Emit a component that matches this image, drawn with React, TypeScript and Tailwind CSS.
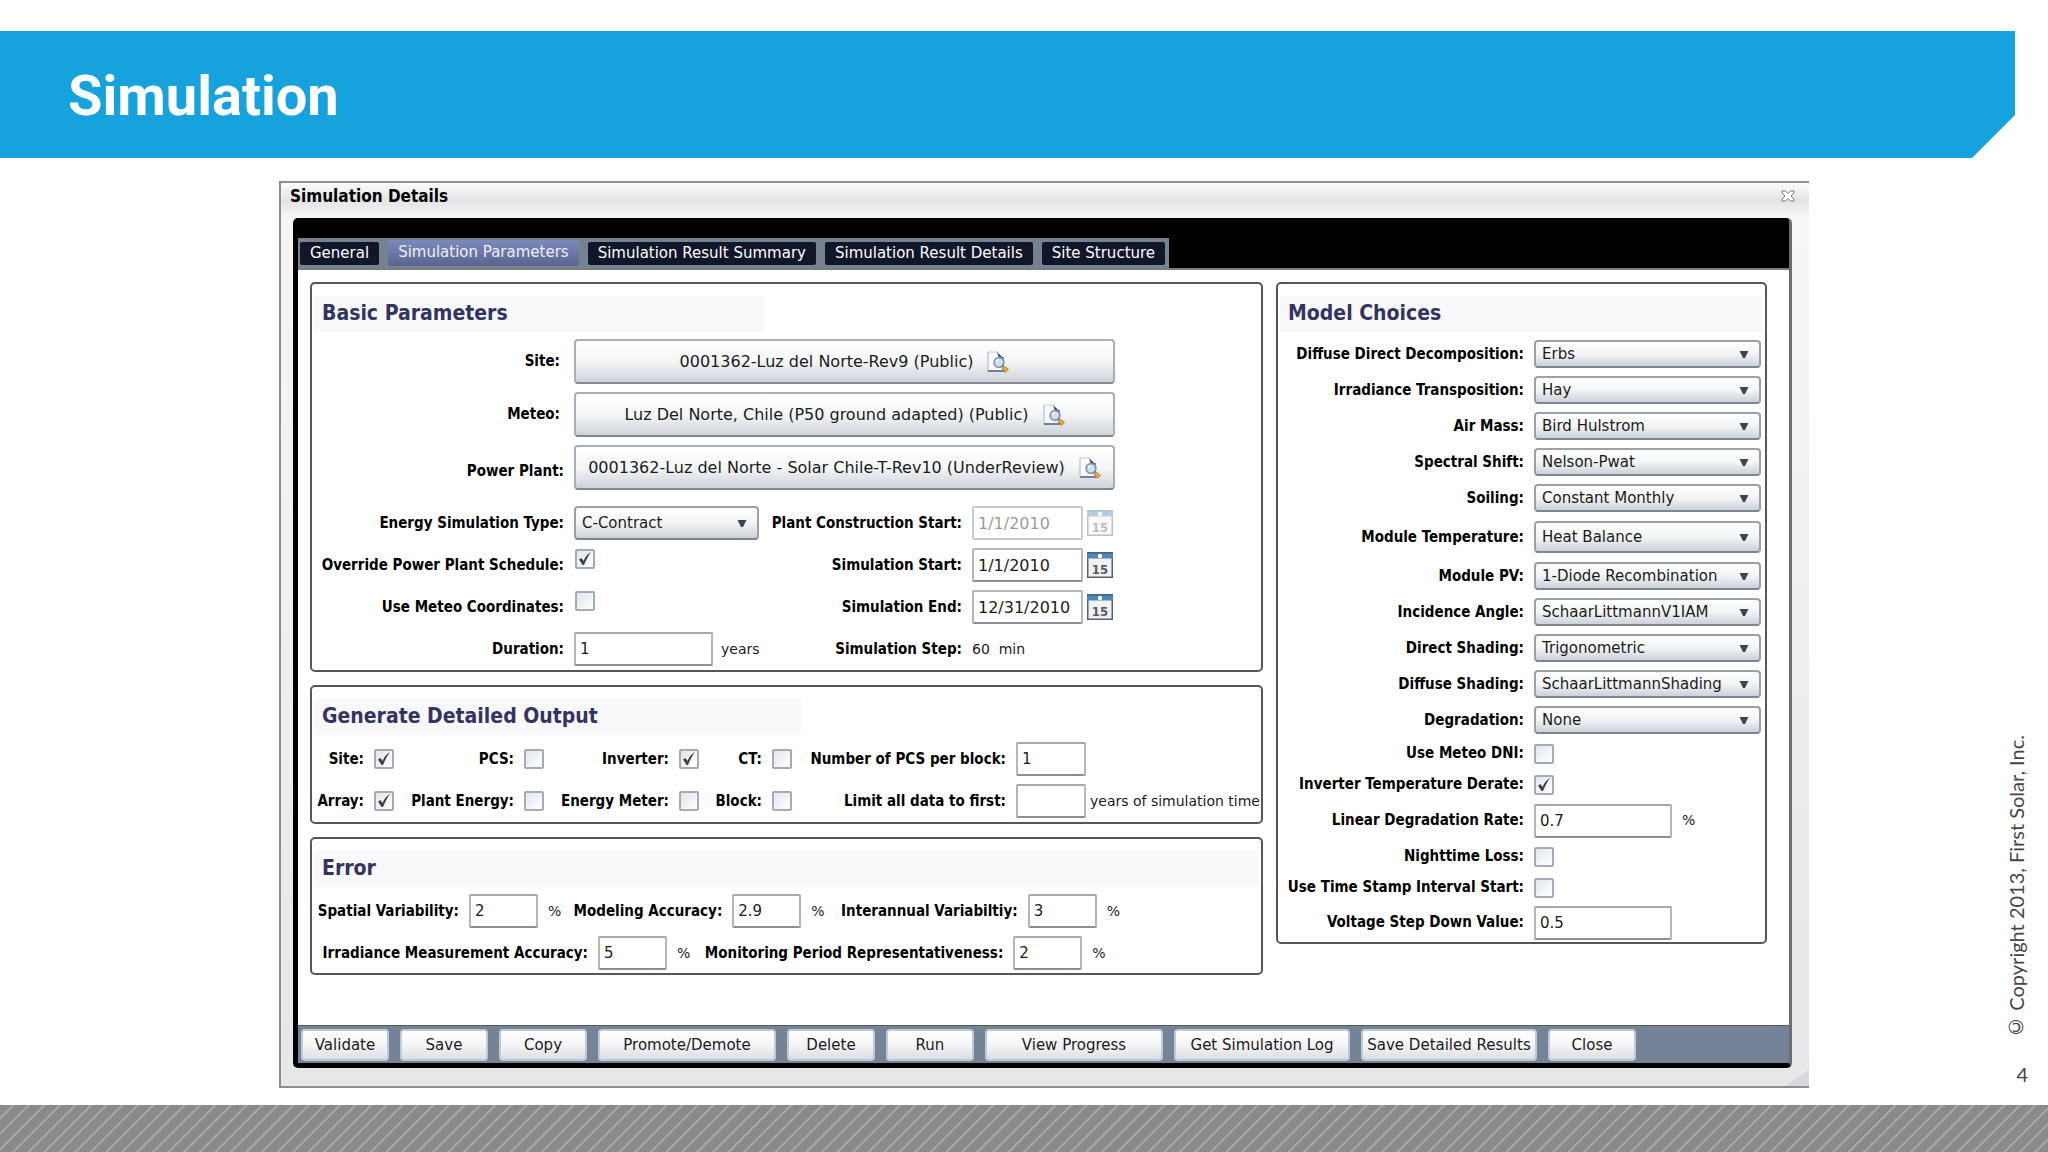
import { useId, useState } from "react";
import type { ReactNode } from "react";

const TABS = [
  "General",
  "Simulation Parameters",
  "Simulation Result Summary",
  "Simulation Result Details",
  "Site Structure",
];

const ACTIONS = [
  { label: "Validate", width: "w-22" },
  { label: "Save", width: "w-22" },
  { label: "Copy", width: "w-22" },
  { label: "Promote/Demote", width: "w-[178px]" },
  { label: "Delete", width: "w-22" },
  { label: "Run", width: "w-22" },
  { label: "View Progress", width: "w-[178px]" },
  { label: "Get Simulation Log", width: "w-44" },
  { label: "Save Detailed Results", width: "w-44" },
  { label: "Close", width: "w-22" },
];

const MODELS = [
  { label: "Diffuse Direct Decomposition:", value: "Erbs" },
  { label: "Irradiance Transposition:", value: "Hay" },
  { label: "Air Mass:", value: "Bird Hulstrom" },
  { label: "Spectral Shift:", value: "Nelson-Pwat" },
  { label: "Soiling:", value: "Constant Monthly" },
  { label: "Module Temperature:", value: "Heat Balance", tall: true },
  { label: "Module PV:", value: "1-Diode Recombination" },
  { label: "Incidence Angle:", value: "SchaarLittmannV1IAM" },
  { label: "Direct Shading:", value: "Trigonometric" },
  { label: "Diffuse Shading:", value: "SchaarLittmannShading" },
  { label: "Degradation:", value: "None" },
];

function Label({ htmlFor, className = "", children }: { htmlFor?: string; className?: string; children: ReactNode }) {
  return (
    <label
      htmlFor={htmlFor}
      className={`text-right font-['DejaVu_Sans_Condensed','DejaVu_Sans',sans-serif] text-[15px] font-bold whitespace-nowrap text-black ${className}`}
    >
      {children}
    </label>
  );
}

function TextBox({ id, value, width }: { id: string; value: string; width: string }) {
  return (
    <input
      id={id}
      type="text"
      defaultValue={value}
      className={`h-[34px] rounded-[2px] border-2 border-[#b4b8bd] border-t-[#a4a9af] border-b-[#8a9099] bg-white px-1 outline-none ${width}`}
    />
  );
}

function CheckBox({ id, checked = false, className = "" }: { id: string; checked?: boolean; className?: string }) {
  return (
    <span className={`inline-grid h-5 w-5 shrink-0 ${className}`}>
      <input
        id={id}
        type="checkbox"
        defaultChecked={checked}
        className="peer col-start-1 row-start-1 h-5 w-5 appearance-none rounded-[2px] border-2 border-[#a3abb6] bg-linear-to-br from-[#e2e6eb] to-white"
      />
      <svg
        viewBox="0 0 20 20"
        className="pointer-events-none invisible col-start-1 row-start-1 h-5 w-5 peer-checked:visible"
        aria-hidden
      >
        <path d="M4 10.5 L6.5 9 L8.5 12 C10 8 12.5 5 16 3 C13 7 11 11 9 16 L7.6 16 Z" fill="#3b3f45" />
      </svg>
    </span>
  );
}

function SelectBox({ id, value, height = "h-7" }: { id: string; value: string; height?: string }) {
  return (
    <span className={`grid w-full ${height}`}>
      <select
        id={id}
        defaultValue={value}
        className={`col-start-1 row-start-1 w-full appearance-none rounded-[4px] border-2 border-[#9aa1a9] border-b-[#7d858f] bg-linear-to-b from-white via-[#f3f5f6] to-[#ccd2d8] pl-1.5 outline-none ${height}`}
      >
        <option>{value}</option>
      </select>
      <svg
        viewBox="0 0 10 7"
        className="pointer-events-none col-start-1 row-start-1 mr-3 h-[7px] w-[10px] self-center justify-self-end"
        aria-hidden
      >
        <path d="M0.5 0 H9.5 L6 7 H4 Z" fill="#3f454c" />
      </svg>
    </span>
  );
}

function LookupIcon() {
  return (
    <svg viewBox="0 0 22 22" className="h-[22px] w-[22px]" aria-hidden>
      <path d="M1 1 H11 L16 6 V20 H1 Z" fill="#f8fafc" />
      <path d="M1 1 V20" stroke="#bcc7d6" strokeWidth="1.4" fill="none" />
      <path d="M1 1 H11" stroke="#c3ccd9" strokeWidth="1" fill="none" />
      <path d="M1 20 H17" stroke="#6f7f9f" strokeWidth="2" fill="none" />
      <path d="M16 6 V15" stroke="#6f7b98" strokeWidth="1.6" fill="none" />
      <path d="M10 1 L16.8 7.5 H12 Z" fill="#3e4b6b" />
      <circle cx="12" cy="11.5" r="4.8" fill="#cfe0f3" stroke="#8593b0" strokeWidth="1.8" />
      <path d="M9.5 11 C9.5 9.5 10.8 8.5 12 8.6" stroke="#ffffff" strokeWidth="1.2" fill="none" />
      <path d="M14.5 16 L16.5 14.6" stroke="#6b7691" strokeWidth="2" />
      <path d="M14.5 17.5 L18 15 L22 18.5 L18.5 22 Z" fill="#d08a28" />
      <path d="M17 17 L20 19.5" stroke="#f3c06b" strokeWidth="1.2" />
    </svg>
  );
}

function CalendarButton({ label, disabled = false }: { label: string; disabled?: boolean }) {
  return (
    <button type="button" aria-label={label} disabled={disabled} className="disabled:opacity-40">
      <svg viewBox="0 0 26 26" className="h-[26px] w-[26px]" aria-hidden>
        <rect x="0.75" y="0.75" width="24.5" height="24.5" fill="#f1f2f3" stroke="#596069" strokeWidth="1.5" />
        <rect x="0" y="0" width="26" height="6.5" fill="#4f86b2" />
        <rect x="0" y="0" width="26" height="1.5" fill="#3f6788" />
        <circle cx="13" cy="4" r="2.2" fill="#ffffff" />
        <text
          x="13"
          y="21.5"
          textAnchor="middle"
          fontSize="13"
          fontWeight="bold"
          fontFamily="DejaVu Sans Condensed, DejaVu Sans, sans-serif"
          fill="#565b62"
        >
          15
        </text>
      </svg>
    </button>
  );
}

function Panel({ title, band, className = "", children }: { title: string; band: string; className?: string; children: ReactNode }) {
  return (
    <section className={`rounded-[5px] border-2 border-[#55575a] bg-white px-0.5 pt-3 ${className}`}>
      <h2
        className={`flex h-9 items-center bg-[#f9f8fb] pl-2 font-['DejaVu_Sans_Condensed','DejaVu_Sans',sans-serif] text-[21px] font-bold text-[#32345f] ${band}`}
      >
        {title}
      </h2>
      {children}
    </section>
  );
}

function LookupRow({ label, value, labelClass }: { label: string; value: string; labelClass: string }) {
  const id = useId();
  return (
    <div className="flex h-[53px] items-center">
      <Label htmlFor={id} className={`w-[250px] ${labelClass}`}>{label}</Label>
      <button
        id={id}
        type="button"
        className="ml-2.5 flex h-[45px] w-[541px] items-center justify-center gap-3.5 rounded-[4px] border-2 border-[#a9afb6] border-b-[#808790] bg-linear-to-b from-white via-[#f5f6f7] to-[#cdd3d8] text-[16px] whitespace-nowrap"
      >
        {value}
        <LookupIcon />
      </button>
    </div>
  );
}

function DateField({ id, value, disabled = false }: { id: string; value: string; disabled?: boolean }) {
  return (
    <div className="flex items-center gap-1">
      <input
        id={id}
        type="text"
        defaultValue={value}
        disabled={disabled}
        className="h-[34px] w-[111px] rounded-[2px] border-2 border-[#b4b8bd] border-b-[#8a9099] bg-white px-1 text-[16px] outline-none disabled:border-[#c9cccf] disabled:text-[#9b9b9b]"
      />
      <CalendarButton label={`Pick date for ${id}`} disabled={disabled} />
    </div>
  );
}

function BasicParameters() {
  return (
    <Panel title="Basic Parameters" band="w-[450px]" className="h-[390px]">
      <div className="pt-[3px]">
        <LookupRow label="Site:" value="0001362-Luz del Norte-Rev9 (Public)" labelClass="pr-1" />
        <LookupRow label="Meteo:" value="Luz Del Norte, Chile (P50 ground adapted) (Public)" labelClass="pr-1" />
        <LookupRow label="Power Plant:" value="0001362-Luz del Norte - Solar Chile-T-Rev10 (UnderReview)" labelClass="pt-2" />
      </div>
      <div className="mt-2 grid auto-rows-[42px] grid-cols-[250px_185px_193px_1fr] items-center gap-x-2.5">
        <Label htmlFor="sim-type">Energy Simulation Type:</Label>
        <SelectBox id="sim-type" value="C-Contract" height="h-[34px]" />
        <Label htmlFor="construction-start">Plant Construction Start:</Label>
        <DateField id="construction-start" value="1/1/2010" disabled />

        <Label htmlFor="override">Override Power Plant Schedule:</Label>
        <CheckBox id="override" checked className="mb-3 ml-px" />
        <Label htmlFor="simulation-start">Simulation Start:</Label>
        <DateField id="simulation-start" value="1/1/2010" />

        <Label htmlFor="meteo-coords">Use Meteo Coordinates:</Label>
        <CheckBox id="meteo-coords" className="mb-3 ml-px" />
        <Label htmlFor="simulation-end">Simulation End:</Label>
        <DateField id="simulation-end" value="12/31/2010" />

        <Label htmlFor="duration">Duration:</Label>
        <div className="flex items-center gap-2">
          <TextBox id="duration" value="1" width="w-[139px]" />
          <span className="text-[14px]">years</span>
        </div>
        <Label>Simulation Step:</Label>
        <span className="text-[14px] whitespace-pre">60  min</span>
      </div>
    </Panel>
  );
}

function DetailedOutput() {
  return (
    <Panel title="Generate Detailed Output" band="w-[487px]" className="h-[139px]">
      <div className="mt-[3px] grid auto-rows-[42px] grid-cols-[50px_20px_110px_20px_115px_20px_53px_20px_204px_auto] items-center gap-x-2.5">
        <Label htmlFor="out-site">Site:</Label>
        <CheckBox id="out-site" checked />
        <Label htmlFor="out-pcs">PCS:</Label>
        <CheckBox id="out-pcs" />
        <Label htmlFor="out-inverter">Inverter:</Label>
        <CheckBox id="out-inverter" checked />
        <Label htmlFor="out-ct">CT:</Label>
        <CheckBox id="out-ct" />
        <Label htmlFor="pcs-count">Number of PCS per block:</Label>
        <TextBox id="pcs-count" value="1" width="w-[70px]" />

        <Label htmlFor="out-array">Array:</Label>
        <CheckBox id="out-array" checked />
        <Label htmlFor="out-plant">Plant Energy:</Label>
        <CheckBox id="out-plant" />
        <Label htmlFor="out-meter">Energy Meter:</Label>
        <CheckBox id="out-meter" />
        <Label htmlFor="out-block">Block:</Label>
        <CheckBox id="out-block" />
        <Label htmlFor="limit-years">Limit all data to first:</Label>
        <div className="flex items-center gap-1">
          <TextBox id="limit-years" value="" width="w-[70px]" />
          <span className="text-[14px] whitespace-nowrap">years of simulation time</span>
        </div>
      </div>
    </Panel>
  );
}

function PercentField({ id, label, value, labelWidth }: { id: string; label: string; value: string; labelWidth: string }) {
  return (
    <div className="flex items-center gap-2.5">
      <Label htmlFor={id} className={labelWidth}>{label}</Label>
      <TextBox id={id} value={value} width="w-[69px]" />
      <span className="text-[14px]">%</span>
    </div>
  );
}

function ErrorParameters() {
  return (
    <Panel title="Error" band="w-full" className="h-[138px]">
      <div className="mt-[3px] flex h-[42px] items-center gap-2">
        <PercentField id="spatial" label="Spatial Variability:" value="2" labelWidth="w-[145px]" />
        <PercentField id="modeling" label="Modeling Accuracy:" value="2.9" labelWidth="w-[153px]" />
        <PercentField id="interannual" label="Interannual Variabiltiy:" value="3" labelWidth="w-[185px]" />
      </div>
      <div className="flex h-[42px] items-center gap-2">
        <PercentField id="irradiance" label="Irradiance Measurement Accuracy:" value="5" labelWidth="w-[274px]" />
        <PercentField id="monitoring" label="Monitoring Period Representativeness:" value="2" labelWidth="w-[305px]" />
      </div>
    </Panel>
  );
}

function ModelRow({ id, label, height, children }: { id: string; label: string; height: string; children: ReactNode }) {
  return (
    <div className={`flex items-center gap-2.5 ${height}`}>
      <Label htmlFor={id} className="w-[244px]">{label}</Label>
      <div className="flex flex-1 items-center gap-2.5">{children}</div>
    </div>
  );
}

function ModelChoices() {
  return (
    <Panel title="Model Choices" band="w-full" className="h-[662px] w-[491px] shrink-0">
      <div className="pt-1 pr-0.5">
        {MODELS.map((m) => (
          <ModelRow key={m.label} id={m.label} label={m.label} height={m.tall ? "h-[42px]" : "h-9"}>
            <SelectBox id={m.label} value={m.value} height={m.tall ? "h-8" : "h-7"} />
          </ModelRow>
        ))}
        <ModelRow id="meteo-dni" label="Use Meteo DNI:" height="h-[31px]">
          <CheckBox id="meteo-dni" />
        </ModelRow>
        <ModelRow id="derate" label="Inverter Temperature Derate:" height="h-[31px]">
          <CheckBox id="derate" checked />
        </ModelRow>
        <ModelRow id="degradation-rate" label="Linear Degradation Rate:" height="h-[41px]">
          <TextBox id="degradation-rate" value="0.7" width="w-[138px]" />
          <span className="text-[14px]">%</span>
        </ModelRow>
        <ModelRow id="night-loss" label="Nighttime Loss:" height="h-[31px]">
          <CheckBox id="night-loss" />
        </ModelRow>
        <ModelRow id="interval-start" label="Use Time Stamp Interval Start:" height="h-[31px]">
          <CheckBox id="interval-start" />
        </ModelRow>
        <ModelRow id="step-down" label="Voltage Step Down Value:" height="h-[39px]">
          <TextBox id="step-down" value="0.5" width="w-[138px]" />
        </ModelRow>
      </div>
    </Panel>
  );
}

function SimulationWindow() {
  const [activeTab, setActiveTab] = useState("Simulation Parameters");

  return (
    <div className="flex min-w-0 flex-1 flex-col border-2 border-r-0 border-[#8b8d90] bg-[#e6e7e9] font-['DejaVu_Sans',sans-serif] text-[15px] text-[#1b1b1b]">
      <div className="flex h-[35px] items-start justify-between bg-linear-to-b from-[#fbfbfb] via-[#e4e4e6] to-[#f6f6f7] pt-[3px] pr-3.5 pl-[9px]">
        <h2 className="font-['DejaVu_Sans_Condensed','DejaVu_Sans',sans-serif] text-[17px] leading-5 font-bold text-black">
          Simulation Details
        </h2>
        <button type="button" aria-label="Close window" className="mt-1 leading-3">
          <svg viewBox="0 0 14 12" className="h-3 w-3.5" aria-hidden>
            <path
              d="M1 1 H4.5 L7 3.6 L9.5 1 H13 V3 L10 6 L13 9 V11 H9.5 L7 8.4 L4.5 11 H1 V9 L4 6 L1 3 Z"
              fill="#ffffff"
              stroke="#77797c"
              strokeWidth="1"
            />
          </svg>
        </button>
      </div>

      <div className="flex flex-col bg-linear-to-b from-[#f6f6f7] to-[#e6e7e9] pr-[17px] pl-3">
        <div className="flex flex-1 flex-col rounded-[5px] border-r-[3px] border-b-[5px] border-l-[5px] border-black border-r-[#6c6e71] bg-black pt-5">
          <div className="flex h-8 border-b-2 border-[#7a7d80]">
            <div role="tablist" className="flex items-center gap-[9px] bg-[#74838f] pr-1 pl-0.5">
              {TABS.map((tab) => (
                <button
                  key={tab}
                  type="button"
                  role="tab"
                  aria-selected={tab === activeTab}
                  onClick={() => setActiveTab(tab)}
                  className={
                    tab === activeTab
                      ? "h-[26px] rounded-[2px] bg-linear-to-b from-[#7d89bb] to-[#59658f] px-2.5 pb-0.5 text-[15px] leading-5 whitespace-nowrap text-[#eef0f8]"
                      : "h-[23px] rounded-[2px] bg-[#12162a] px-2.5 text-[15px] leading-5 whitespace-nowrap text-white"
                  }
                >
                  {tab}
                </button>
              ))}
            </div>
          </div>

          <div className="flex items-start gap-[13px] bg-white pt-3 pr-[22px] pb-[50px] pl-3">
            <div className="flex min-w-0 flex-1 flex-col gap-[13px]">
              <BasicParameters />
              <DetailedOutput />
              <ErrorParameters />
            </div>
            <ModelChoices />
          </div>

          <div className="flex h-[38px] items-center gap-[11px] border-t border-[#5b5754] bg-[#758396] pt-px pl-[3px]">
            {ACTIONS.map((a) => (
              <button
                key={a.label}
                type="button"
                className={`h-8 rounded-[4px] border-2 border-[#bccad9] bg-linear-to-b from-white via-[#f5f5f7] to-[#dcdee2] text-[15px] whitespace-nowrap ${a.width}`}
              >
                {a.label}
              </button>
            ))}
          </div>
        </div>
      </div>
      <div className="flex flex-1 items-end justify-end">
        <svg viewBox="0 0 28 19" className="h-4 w-6" aria-hidden>
          <path d="M0 19 L28 0 V19 Z" fill="#d8d9dd" />
        </svg>
      </div>
    </div>
  );
}

export default function App() {
  return (
    <div className="flex min-h-screen flex-col bg-white pt-[31px]">
      <header className="mr-[33px] flex h-[127px] items-center bg-[#16a2dd] pt-0.5 pl-[68px] [clip-path:polygon(0_0,100%_0,100%_84px,calc(100%-43px)_100%,0_100%)]">
        <h1 className="font-['Roboto','Liberation_Sans',sans-serif] text-[56px] font-bold text-white">Simulation</h1>
      </header>

      <main className="flex flex-1 pt-[23px] pb-[17px] pl-[279px]">
        <SimulationWindow />
        <aside className="flex w-[239px] shrink-0 flex-col items-end justify-end pr-5 font-['Lato',sans-serif] text-[#454545]">
          <p className="rotate-180 text-[20px] leading-6 whitespace-nowrap [writing-mode:vertical-rl]">
            © Copyright 2013, First Solar, Inc.
          </p>
          <p className="mt-5 text-[20px] leading-7">4</p>
        </aside>
      </main>

      <footer className="h-[47px] bg-[repeating-linear-gradient(135deg,#8a8a8c_0px,#8a8a8c_8px,#a8a8aa_9px,#a8a8aa_10px,#8a8a8c_11px)]" />
    </div>
  );
}
